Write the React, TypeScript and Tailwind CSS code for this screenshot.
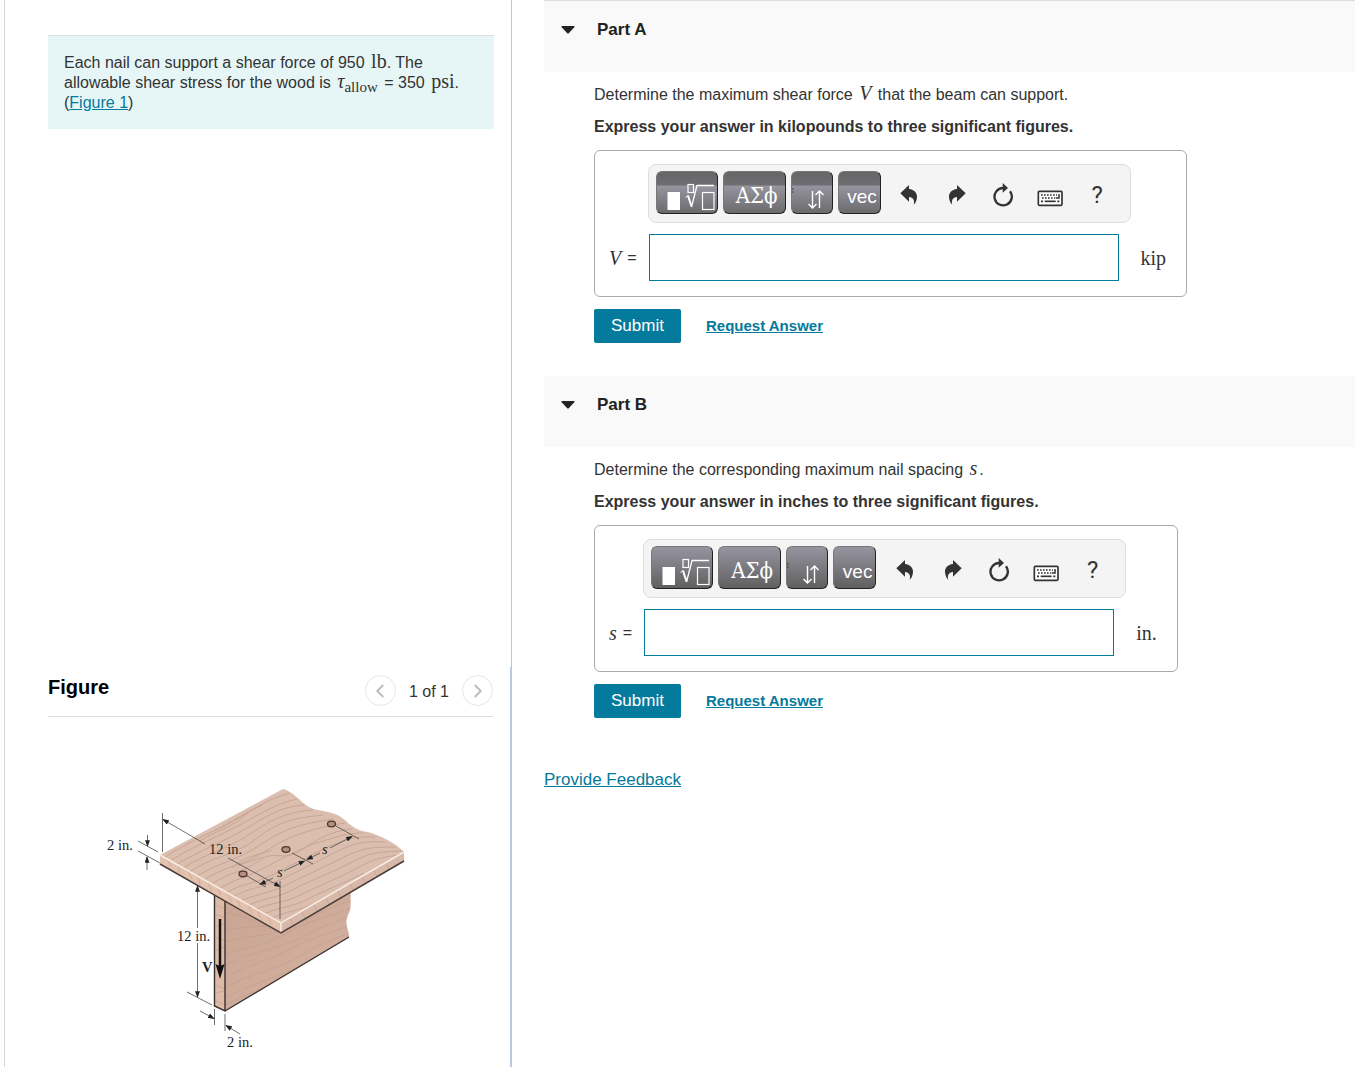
import { ReactNode } from 'react';
import { ChevronLeft, ChevronRight } from 'lucide-react';

const parts = [
  {
    id: 'a',
    title: 'Part A',
    question: 'Determine the maximum shear force ',
    symbol: 'V',
    rest: ' that the beam can support.',
    hint: 'Express your answer in kilopounds to three significant figures.',
    unit: 'kip',
    headerClass: 'border-t border-[#dcdcdc]',
    keyClass:
      'bg-[linear-gradient(to_bottom,#666668_0px,#6f6f71_13px,#9694a0_14px,#6b6b6d_100%)]',
  },
  {
    id: 'b',
    title: 'Part B',
    question: 'Determine the corresponding maximum nail spacing ',
    symbol: 's',
    rest: '.',
    hint: 'Express your answer in inches to three significant figures.',
    unit: 'in.',
    headerClass: '',
    keyClass: 'bg-[linear-gradient(to_bottom,#9694a0,#606060)]',
  },
];

function Serif({ children }: { children: ReactNode }) {
  return (
    <span className="pl-[2px] font-['Liberation_Serif',serif] text-[20px] leading-0">
      {children}
    </span>
  );
}

function MathVar({ children }: { children: ReactNode }) {
  return (
    <i className="px-[2px] font-['Liberation_Serif',serif] text-[20px] leading-0">
      {children}
    </i>
  );
}

function TemplateIcon() {
  return (
    <svg width="61" height="41" viewBox="1 1 61 41" fill="none" stroke="#fff">
      <rect x="11.5" y="21" width="12.5" height="18" fill="#fff" stroke="none" />
      <rect x="32" y="13.5" width="5.5" height="8" strokeWidth="1.2" />
      <path d="M29.5 26.5l2.5-2" strokeWidth="1" />
      <path d="M32 24.5l3.5 11" strokeWidth="2" />
      <path d="M35.5 36l5.5-21.5h17" strokeWidth="1.3" />
      <rect x="46.5" y="21.5" width="11.5" height="17" strokeWidth="1.2" />
    </svg>
  );
}

function ArrowsIcon() {
  return (
    <svg width="40" height="41" viewBox="1 1 40 41" fill="none" stroke="#fff">
      <path d="M1 18h1.5M1 21h1.5" stroke="#333" />
      <path
        d="M21.5 20v16.5M17.5 33l4 4 4-4M28.5 37V20.5M24.5 24l4-4 4 4"
        strokeWidth="1.4"
      />
    </svg>
  );
}

function UndoShape() {
  return (
    <path
      d="M16 43L42 18V30C58 32 67 42 66 55C65 66 61 74 56 77C60 66 55 54 42 54V68Z"
      fill="#333"
    />
  );
}

function UndoIcon() {
  return (
    <svg width="28" height="28" viewBox="0 0 84 84">
      <UndoShape />
    </svg>
  );
}

function RedoIcon() {
  return (
    <svg width="28" height="28" viewBox="0 0 84 84">
      <g transform="translate(87 0) scale(-1 1)">
        <UndoShape />
      </g>
    </svg>
  );
}

function ResetIcon() {
  return (
    <svg width="28" height="28" viewBox="0 0 84 84">
      <path
        d="M63 37A26 26 0 1 1 42 27"
        fill="none"
        stroke="#333"
        strokeWidth="7"
      />
      <path d="M41 12L57 27L41 41Z" fill="#333" />
    </svg>
  );
}

function KeyboardIcon() {
  return (
    <svg width="28" height="28" viewBox="0 0 84 84" fill="none" stroke="#333">
      <rect x="7" y="37" width="71" height="42" rx="3" fill="#fff" strokeWidth="5" />
      <path d="M15 48H63M18 57H58" strokeWidth="5" strokeDasharray="5 4" />
      <path d="M15 67h6M64 67h6" strokeWidth="5" />
      <path d="M26 67H59" strokeWidth="5" />
      <path d="M69 45v12h-9" strokeWidth="4.5" />
    </svg>
  );
}

function Toolbar({ keyClass }: { keyClass: string }) {
  const key = `h-[43px] rounded-md border border-t-[#777] border-l-[#777] border-r-[#222] border-b-[#222] text-white ${keyClass}`;
  return (
    <div className="flex gap-[5px] rounded-lg border border-[#ddd] bg-[#f4f4f4] pt-[6px] pr-[9px] pb-2 pl-[7px]">
      <button type="button" aria-label="Templates" className={`w-[62px] ${key}`}>
        <TemplateIcon />
      </button>
      <button
        type="button"
        className={`w-[63px] pt-[6px] pl-[5px] font-['DejaVu_Serif_Condensed','DejaVu_Serif',serif] text-[22px] leading-6 ${key}`}
      >
        ΑΣϕ
      </button>
      <button type="button" aria-label="Arrows" className={`w-[42px] ${key}`}>
        <ArrowsIcon />
      </button>
      <button
        type="button"
        className={`w-[43px] pt-2 pl-[6px] text-[19px] leading-6 ${key}`}
      >
        vec
      </button>
      <div className="flex text-[#333]">
        <button type="button" aria-label="Undo" className="flex w-[47px] items-center justify-center">
          <UndoIcon />
        </button>
        <button type="button" aria-label="Redo" className="flex w-[47px] items-center justify-center">
          <RedoIcon />
        </button>
        <button type="button" aria-label="Reset" className="flex w-[47px] items-center justify-center">
          <ResetIcon />
        </button>
        <button type="button" aria-label="Keyboard shortcuts" className="flex w-[47px] items-center justify-center">
          <KeyboardIcon />
        </button>
        <button type="button" className="w-[47px] pt-1 font-[Roboto,sans-serif] text-[24px] leading-6">
          ?
        </button>
      </div>
    </div>
  );
}

function BeamFigure() {
  return (
    <svg
      viewBox="100 780 315 280"
      width="315"
      height="280"
      role="img"
      aria-label="T-beam made of two nailed boards"
      fontFamily="'Liberation Serif', serif"
      fontSize="14.5"
      fill="#222"
    >
      <defs>
        <clipPath id="top">
          <path d="M160 855L283 789C290 791 294 795 299 799C305 805 311 809 318 810C329 812 337 813 345 820C352 827 358 831 368 832C379 835 396 843 404 852L281 923Z" />
        </clipPath>
        <clipPath id="web">
          <path d="M225 901L281 932L351 892C350 903 352 908 348 915C344 925 349 929 349 937L225 1011Z" />
        </clipPath>
        <marker id="head" viewBox="0 0 8 6" refX="7" refY="3" markerWidth="7" markerHeight="5" markerUnits="userSpaceOnUse" orient="auto-start-reverse">
          <path d="M0 0L8 3L0 6Z" fill="#222" />
        </marker>
        <linearGradient id="webFill" x1="0" y1="0" x2="1" y2="1">
          <stop offset="0" stopColor="#c9a594" />
          <stop offset="1" stopColor="#d5b3a2" />
        </linearGradient>
      </defs>

      {/* Vertical board */}
      <path d="M225 895L281 925L351 888V892C350 903 352 908 348 915C344 925 349 929 349 937L225 1011Z" fill="url(#webFill)" />
      <g clipPath="url(#web)" fill="none" stroke="#b98f7d" strokeWidth="0.6" opacity="0.55">
        <path d="M220 932C250 924 265 930 290 919S330 900 355 890" />
        <path d="M220 944C250 932 270 940 300 923S335 907 355 899" />
        <path d="M220 956C245 946 262 948 285 934S330 917 355 907" />
        <path d="M220 968C250 950 275 951 300 938S335 922 355 915" />
        <path d="M220 980C250 964 265 962 290 949S335 932 355 923" />
        <path d="M220 991C250 972 275 971 300 956S330 941 355 931" />
        <path d="M220 1001C245 986 270 980 300 966S330 949 350 938" />
        <path d="M220 1009C245 993 270 986 300 972" />
        <path d="M222 912C240 914 252 921 270 929" />
      </g>
      <path d="M214 892L225 898V1011L214 1006Z" fill="#ddbba9" />
      <path d="M216 905l8 3M216 915l8 2M216 926l8-2M216 938l8 2M216 950l8-3M216 985l8 4M216 993l8-2M216 1001l8 3" stroke="#c39c89" strokeWidth="0.6" />
      <path d="M214.5 892V1006L225 1011V898M225 1011L349 937" fill="none" stroke="#3b302d" strokeWidth="1.4" />

      {/* Flange */}
      <path d="M160 855L281 923V933L160 864Z" fill="#e2c1ae" />
      <path d="M281 923L404 852V861L281 933Z" fill="#d8b8a8" />
      <path d="M160 855L283 789C290 791 294 795 299 799C305 805 311 809 318 810C329 812 337 813 345 820C352 827 358 831 368 832C379 835 396 843 404 852L281 923Z" fill="#dcbfb0" />
      <g clipPath="url(#top)" fill="none" stroke="#c09b8a" strokeWidth="0.9" opacity="0.8">
        <path d="M164 858C190 840 215 832 240 817S270 799 290 793" />
        <path d="M170 861C195 845 220 836 245 822S277 804 297 799" />
        <path d="M176 865C200 850 222 843 247 828S282 807 304 805" />
        <path d="M183 868C207 853 226 850 250 834S288 812 313 810" />
        <path d="M190 872C210 857 234 856 256 839S292 818 323 815" />
        <path d="M197 876C218 863 236 861 260 845S299 824 334 819" />
        <path d="M204 880C225 866 242 866 264 852S304 830 345 823" />
        <path d="M212 884C230 872 245 871 257 862S272 856 286 856S317 832 352 829" />
        <path d="M219 889C232 880 245 878 262 869S300 848 320 842S346 833 364 833" />
        <path d="M226 893C240 884 254 884 270 876S305 858 328 847S360 837 375 837" />
        <path d="M233 897C248 888 260 888 277 881S312 864 334 853S366 841 386 842" />
        <path d="M241 901C252 895 270 893 284 886S320 869 342 858S374 847 396 847" />
        <path d="M249 905C263 898 278 898 292 890S328 875 350 863S382 852 404 851" />
        <path d="M256 909C270 903 284 903 300 895S335 880 357 868S388 857 404 854" />
        <path d="M264 914C279 907 293 907 308 899S343 884 364 873" />
        <path d="M272 918C286 911 300 911 315 903S340 890 357 880" />
        <path d="M232 868C244 856 256 856 272 850M238 866C248 861 253 861 262 857" />
        <path d="M200 841C215 831 230 829 248 813M214 831C232 822 245 813 262 805" />
      </g>
      <path d="M168 860l3 7M178 866l2 7M188 871l4 8M198 877l2 7M208 883l4 8M218 888l2 7M228 894l4 8M238 900l2 7M248 905l4 8M258 911l2 7M268 917l4 8M290 919l3 5M302 912l3 6M314 905l3 6M326 898l3 6M338 891l3 6M350 884l3 6M362 877l3 6M374 871l3 5M386 864l3 5" stroke="#c7a18e" strokeWidth="0.7" />
      <path d="M160 855L281 923L404 852M281 923V932" fill="none" stroke="#f8ebe3" strokeWidth="1.5" />
      <path d="M160 864L281 933L404 861" fill="none" stroke="#4b3e3a" strokeWidth="1.5" />

      {/* Nails */}
      <g fill="#b68f7e" stroke="#4a3732" strokeWidth="1.3">
        <ellipse cx="243" cy="874" rx="4" ry="2.8" />
        <ellipse cx="286" cy="849.5" rx="4" ry="2.8" />
        <ellipse cx="331.5" cy="824" rx="4" ry="2.8" />
      </g>

      {/* Dimension lines */}
      <g fill="none" stroke="#4a4a4a" strokeWidth="0.8">
        <path d="M162.5 813V852M138 841L158 852M138 851L160 863" />
        <path d="M205 844L163 819.5" markerEnd="url(#head)" />
        <path d="M228 858L280 886.5" markerEnd="url(#head)" />
        <path d="M280 881V919" />
        <path d="M147.5 835V846" markerEnd="url(#head)" />
        <path d="M147 870V857" markerEnd="url(#head)" />
        <path d="M247 876L266 887M292 853L313 864M336 826L359 839" />
        <path d="M273 878L260 884.5" markerEnd="url(#head)" />
        <path d="M284 871L304.5 861" markerEnd="url(#head)" />
        <path d="M320 853L307 859.5" markerEnd="url(#head)" />
        <path d="M330 848L352 836.5" markerEnd="url(#head)" />
        <path d="M197.5 928V886" markerEnd="url(#head)" />
        <path d="M197.5 943V997" markerEnd="url(#head)" />
        <path d="M187 992L212 1005M214.5 1009V1025M225 1014V1031" />
        <path d="M200 1011L214 1018.5" markerEnd="url(#head)" />
        <path d="M240 1034L226 1025.5" markerEnd="url(#head)" />
      </g>
      <path d="M220 919V966" stroke="#111" strokeWidth="2.5" />
      <path d="M215.5 964Q220 967 224.5 964L220 979Z" fill="#111" />

      <text x="107" y="850">2 in.</text>
      <text x="209" y="854">12 in.</text>
      <text x="177" y="941">12 in.</text>
      <text x="227" y="1047">2 in.</text>
      <text x="202" y="972" fontWeight="bold">V</text>
      <text x="277" y="877" fontStyle="italic">s</text>
      <text x="322" y="854" fontStyle="italic">s</text>
    </svg>
  );
}

export default function App() {
  return (
    <div className="flex min-h-screen bg-white font-['Liberation_Sans',Arial,sans-serif] text-base leading-5 text-[#333]">
      {/* Problem statement and figure */}
      <aside className="ml-1 flex w-[508px] shrink-0 flex-col border-l border-[#d8d8d8]">
        <div className="flex-1 border-r border-[#b9c8dc] pt-[35px] pr-[17px] pl-[43px]">
          <p className="border-t border-[#d8e0e0] bg-[#e6f6f7] px-4 pt-[17px] pb-4">
            Each nail can support a shear force of 950 <Serif>lb</Serif>. The
            allowable shear stress for the wood is{' '}
            <span className="px-[2px] font-['Liberation_Serif',serif]">
              <i className="text-[20px] leading-0">τ</i>
              <sub className="text-[15px]">allow</sub>
            </span>{' '}
            = 350 <Serif>psi</Serif>.
            <br />(
            <a href="#figure" className="text-[#047a9c] underline">
              Figure 1
            </a>
            )
          </p>
        </div>
        <section id="figure" className="h-[400px] border-r-2 border-[#b9cbe0] pt-2 pr-[17px] pl-[43px]">
          <div className="flex justify-between border-b border-[#ddd] pb-[10px]">
            <h2 className="pt-[2px] text-[20px] leading-5 font-bold text-black">Figure</h2>
            <div className="flex items-center gap-[13px]">
              <button
                type="button"
                aria-label="Previous figure"
                className="flex size-[31px] items-center justify-center rounded-full border border-[#e6e6e6] text-[#bbb]"
              >
                <ChevronLeft size={22} strokeWidth={2} />
              </button>
              <span className="pt-[2px]">1 of 1</span>
              <button
                type="button"
                aria-label="Next figure"
                className="flex size-[31px] items-center justify-center rounded-full border border-[#e6e6e6] text-[#bbb]"
              >
                <ChevronRight size={22} strokeWidth={2} />
              </button>
            </div>
          </div>
          <div className="pt-[63px] pl-[52px]">
            <BeamFigure />
          </div>
        </section>
      </aside>

      {/* Answer parts */}
      <main className="flex-1 pl-8">
        {parts.map((part) => (
          <section key={part.id} className="mb-[33px]">
            <h2
              className={`flex items-center bg-[#f9f9f9] pt-[19px] pb-8 pl-[17px] text-[17px] font-bold text-[#222] ${part.headerClass}`}
            >
              <svg width="14" height="8" viewBox="0 0 14 8" fill="#222">
                <path d="M1 0h12q1 .5.3 1.3L8 7q-1 1-2 0L.7 1.3Q0 .5 1 0z" />
              </svg>
              <span className="pl-[22px]">{part.title}</span>
            </h2>
            <div className="pt-[13px] pl-[50px]">
              <p>
                {part.question}
                <MathVar>{part.symbol}</MathVar>
                {part.rest}
              </p>
              <p className="mt-3 font-bold">{part.hint}</p>
              <div className="mt-[13px] flex w-fit items-end rounded-md border border-[#aaa] pt-[13px] pr-5 pb-[15px] pl-3">
                <label htmlFor={`answer-${part.id}`} className="flex h-[47px] items-center gap-1">
                  <MathVar>{part.symbol}</MathVar> =
                </label>
                <div className="ml-[11px]">
                  <Toolbar keyClass={part.keyClass} />
                  <div className="mt-[11px] pr-3 pl-px">
                    <input
                      id={`answer-${part.id}`}
                      type="text"
                      className="block h-[47px] w-full border border-[#047a9c] px-2 outline-none"
                    />
                  </div>
                </div>
                <span className="ml-2 flex h-[47px] items-center">
                  <Serif>{part.unit}</Serif>
                </span>
              </div>
              <div className="mt-3 flex items-center gap-[25px]">
                <button type="button" className="h-[34px] w-[87px] rounded-[2px] bg-[#047a9c] text-[17px] text-white">
                  Submit
                </button>
                <a href="#request" className="text-[15px] font-bold text-[#047a9c] underline">
                  Request Answer
                </a>
              </div>
            </div>
          </section>
        ))}
        <a href="#feedback" className="mt-[19px] inline-block text-[17px] text-[#047a9c] underline">
          Provide Feedback
        </a>
      </main>
    </div>
  );
}
